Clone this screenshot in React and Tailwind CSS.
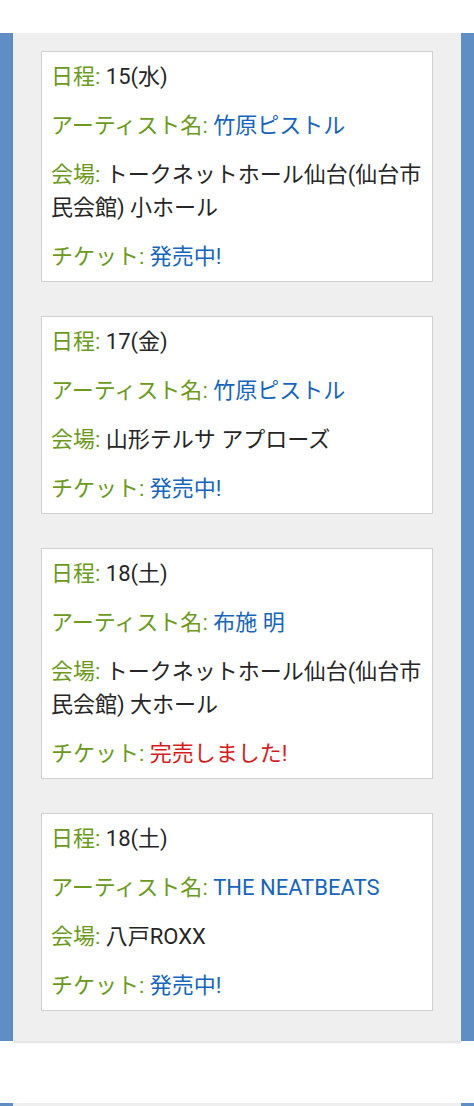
import React from 'react';

const shows = [
  { date: '15(水)', artist: '竹原ピストル', venue: 'トークネットホール仙台(仙台市民会館) 小ホール', soldOut: false },
  { date: '17(金)', artist: '竹原ピストル', venue: '山形テルサ アプローズ', soldOut: false },
  { date: '18(土)', artist: '布施 明', venue: 'トークネットホール仙台(仙台市民会館) 大ホール', soldOut: true },
  { date: '18(土)', artist: 'THE NEATBEATS', venue: '八戸ROXX', soldOut: false },
];

const Label = ({ children }) => <span className="text-[#6b9a1c]">{children}: </span>;

const ShowCard = ({ show }) => (
  <div className="bg-white border border-[#d0d0d0] pl-[9px] pr-[8px] py-[8px] flex flex-col gap-[16px] leading-[33px] text-[22px] text-[#262626]">
    <p><Label>日程</Label>{show.date}</p>
    <p><Label>アーティスト名</Label><span className="text-[#1565c0]">{show.artist}</span></p>
    <p><Label>会場</Label>{show.venue}</p>
    <p>
      <Label>チケット</Label>
      {show.soldOut ? (
        <span className="text-[#d81b1b]">完売しました!</span>
      ) : (
        <span className="text-[#1565c0]">発売中!</span>
      )}
    </p>
  </div>
);

export default function App() {
  return (
    <div
      className="w-[474px] h-[1106px] bg-white overflow-hidden"
      style={{ fontFamily: 'Roboto, "Noto Sans CJK JP", sans-serif' }}
    >
      <div className="h-[33px]" />
      <div className="flex">
        <div className="w-[13px] bg-[#5f8ec4]" />
        <div className="flex-1 bg-[#efefef] px-[28px] pt-[18px] pb-[30px] flex flex-col gap-[34px] shadow-[0_2px_2px_rgba(0,0,0,0.12)]">
          {shows.map((s, i) => (
            <ShowCard key={i} show={s} />
          ))}
        </div>
        <div className="w-[13px] bg-[#5f8ec4]" />
      </div>
      <div className="h-[62px]" />
      <div className="flex h-[10px]">
        <div className="w-[13px] bg-[#5f8ec4]" />
        <div className="flex-1 bg-[#efefef]" />
        <div className="w-[13px] bg-[#5f8ec4]" />
      </div>
    </div>
  );
}
